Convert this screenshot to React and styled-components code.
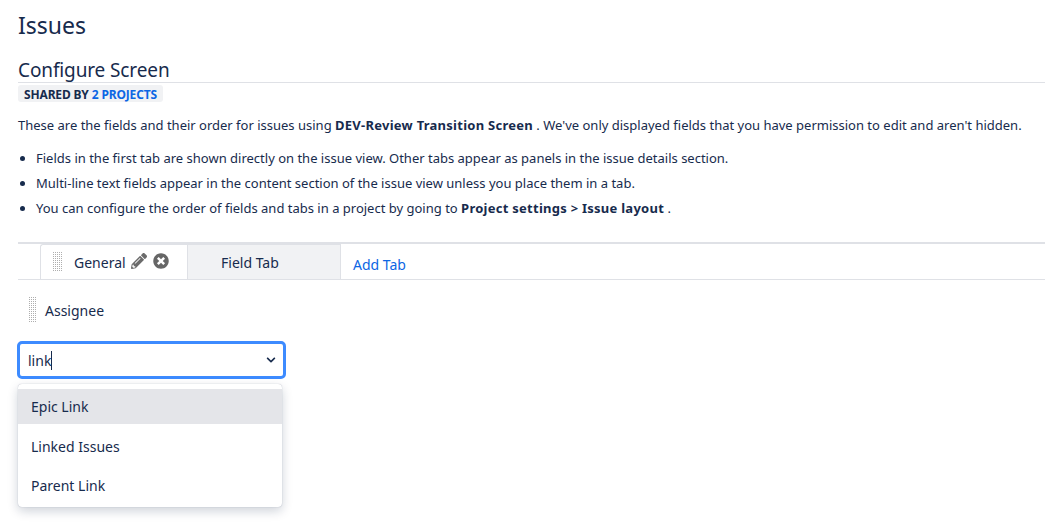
import React from "react";
import styled, { createGlobalStyle } from "styled-components";
import { FaPencilAlt, FaTimesCircle, FaChevronDown } from "react-icons/fa";

const GlobalStyle = createGlobalStyle`
  html, body {
    margin: 0;
    padding: 0;
    background: #fff;
    overflow: hidden;
  }
  body {
    font-family: "Noto Sans", "Open Sans", sans-serif;
    color: #172b4d;
  }
`;

const Page = styled.div`
  width: 1045px;
  height: 522px;
  padding-left: 18px;
  box-sizing: border-box;
  display: flex;
  flex-direction: column;
`;

const PageTitle = styled.h1`
  margin: 10px 0 0;
  font-size: 23px;
  line-height: 30px;
  font-weight: 400;
`;

const ScreenTitle = styled.h2`
  margin: 19px 0 0;
  font-size: 19px;
  line-height: 23px;
  font-weight: 400;
  letter-spacing: -0.12px;
  border-bottom: 1px solid #dfe1e6;
`;

const Badge = styled.div`
  align-self: flex-start;
  margin-top: 2px;
  padding: 1px 6px 0;
  height: 17px;
  box-sizing: border-box;
  line-height: 17px;
  background: #f1f2f4;
  border-radius: 3px;
  font-size: 12px;
  font-weight: 700;
  letter-spacing: -0.15px;
`;

const BadgeLink = styled.span`
  color: #0c66e4;
`;

const Paragraph = styled.p`
  margin: 13px 0 0;
  font-size: 13px;
  line-height: 20px;
`;

const Strong = styled.b`
  letter-spacing: 0.26px;
`;

const Notes = styled.ul`
  margin: 13px 0 0;
  padding: 0 0 0 18px;
  font-size: 13px;
  line-height: 20px;
`;

const Note = styled.li`
  margin-bottom: 5px;
`;

const TabBar = styled.div`
  margin-top: 19px;
  height: 35px;
  display: flex;
  border-top: 2px solid #dfe1e6;
  border-bottom: 1px solid #dfe1e6;
  padding-left: 22px;
`;

const Tab = styled.div`
  width: ${({ $width }) => $width}px;
  box-sizing: border-box;
  display: flex;
  align-items: center;
  font-size: 14px;
  padding-left: ${({ $inset }) => $inset}px;
  border-left: 1px solid #dfe1e6;
  border-right: ${({ $active }) => ($active ? "none" : "1px solid #dfe1e6")};
  background: ${({ $active }) => ($active ? "#fff" : "#f1f2f4")};
  border-top: 1px solid #dfe1e6;
  border-top-left-radius: ${({ $active }) => ($active ? "3px" : "0")};
`;

const Grip = styled.span`
  flex: none;
  width: ${({ $width }) => $width}px;
  height: ${({ $height }) => $height}px;
  background-image: conic-gradient(#aeaeae 25%, transparent 0);
  background-size: 2px 2px;
`;

const TabGrip = styled(Grip)`
  margin-right: 12px;
`;

const TabLabel = styled.span`
  margin-right: 5px;
`;

const PenIcon = styled(FaPencilAlt)`
  width: 16px;
  height: 16px;
  color: #6b6b6b;
  margin: -3px 6px 0 0;
`;

const CloseIcon = styled(FaTimesCircle)`
  width: 16px;
  height: 16px;
  color: #666;
  margin-top: -3px;
`;

const AddTab = styled.a`
  margin: 7px 0 0 12px;
  font-size: 14px;
  line-height: 28px;
  color: #0c66e4;
`;

const FieldRow = styled.div`
  margin: 17px 0 0 10px;
  height: 26px;
  display: flex;
  align-items: center;
  font-size: 14px;
`;

const FieldGrip = styled(Grip)`
  margin-right: 8px;
`;

const SelectBox = styled.div`
  margin: 18px 0 0 -1px;
  width: 269px;
  height: 38px;
  box-sizing: border-box;
  border: 3px solid #3d8bff;
  border-radius: 5px;
  padding: 0 7px 0 8px;
  display: flex;
  align-items: center;
  justify-content: space-between;
  font-size: 14px;
`;

const Caret = styled.span`
  display: inline-block;
  width: 1px;
  height: 19px;
  background: #172b4d;
  vertical-align: -4px;
`;

const Chevron = styled(FaChevronDown)`
  width: 10px;
  height: 10px;
  color: #172b4d;
`;

const Menu = styled.div`
  margin-top: 5px;
  width: 264px;
  height: 123px;
  box-sizing: border-box;
  padding: 5px 0;
  border-radius: 4px;
  background: #fff;
  box-shadow: 0 4px 11px rgba(9, 30, 66, 0.2), 0 0 1px rgba(9, 30, 66, 0.35);
`;

const MenuItem = styled.div`
  height: ${({ $active }) => ($active ? 35 : 39)}px;
  box-sizing: border-box;
  display: flex;
  align-items: center;
  padding: ${({ $active }) => ($active ? "0" : "6px")} 0 0 13px;
  font-size: 14px;
  background: ${({ $active }) => ($active ? "#e4e5e9" : "transparent")};
`;

const App = () => (
  <>
    <GlobalStyle />
    <Page>
      <PageTitle>Issues</PageTitle>
      <ScreenTitle>Configure Screen</ScreenTitle>
      <Badge>
        SHARED BY <BadgeLink>2 PROJECTS</BadgeLink>
      </Badge>
      <Paragraph>
        These are the fields and their order for issues using <Strong>DEV-Review Transition Screen</Strong> . We've only displayed fields that you have permission to edit and aren't hidden.
      </Paragraph>
      <Notes>
        <Note>Fields in the first tab are shown directly on the issue view. Other tabs appear as panels in the issue details section.</Note>
        <Note>Multi-line text fields appear in the content section of the issue view unless you place them in a tab.</Note>
        <Note>
          You can configure the order of fields and tabs in a project by going to <Strong>Project settings &gt; Issue layout</Strong> .
        </Note>
      </Notes>
      <TabBar>
        <Tab $active $width={147} $inset={11}>
          <TabGrip $width={10} $height={20} />
          <TabLabel>General</TabLabel>
          <PenIcon />
          <CloseIcon />
        </Tab>
        <Tab $width={154} $inset={33}>Field Tab</Tab>
        <AddTab>Add Tab</AddTab>
      </TabBar>
      <FieldRow>
        <FieldGrip $width={9} $height={26} />
        Assignee
      </FieldRow>
      <SelectBox>
        <span>link<Caret /></span>
        <Chevron />
      </SelectBox>
      <Menu>
        <MenuItem $active>Epic Link</MenuItem>
        <MenuItem>Linked Issues</MenuItem>
        <MenuItem>Parent Link</MenuItem>
      </Menu>
    </Page>
  </>
);

export default App;
